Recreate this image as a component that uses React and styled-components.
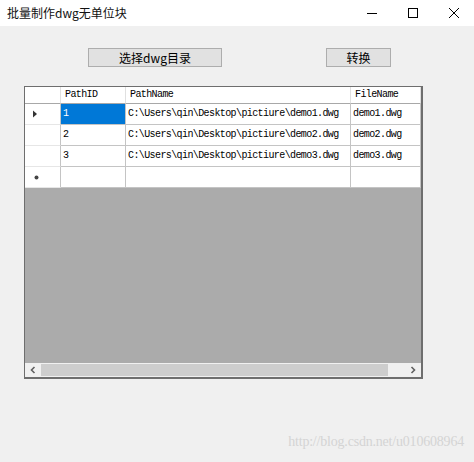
import React from "react";
import styled, { createGlobalStyle } from "styled-components";

const GlobalStyle = createGlobalStyle`
  html, body {
    margin: 0;
    padding: 0;
    background: #f0f0f0;
  }
  * {
    box-sizing: border-box;
  }
`;

const Window = styled.div`
  position: relative;
  width: 474px;
  height: 462px;
  background: #f0f0f0;
  display: flex;
  flex-direction: column;
  overflow: hidden;
  font-family: "Noto Sans CJK SC", "Noto Sans", sans-serif;
`;

const TitleBar = styled.div`
  height: 26px;
  background: #ffffff;
  display: flex;
  align-items: center;
  padding-left: 7px;
`;

const Title = styled.div`
  flex: 1;
  font-size: 12px;
  color: #111;
  line-height: 26px;
`;

const Controls = styled.div`
  display: flex;
  height: 26px;
`;

const ControlButton = styled.div`
  width: 41px;
  height: 26px;
  display: flex;
  align-items: center;
  justify-content: center;
`;

const ButtonRow = styled.div`
  display: flex;
  gap: 104px;
  margin: 22px 0 0 88px;
`;

const FormButton = styled.div`
  width: ${(p) => p.w}px;
  height: 19px;
  border: 1px solid #adadad;
  background: #e1e1e1;
  font-family: "Noto Sans CJK SC", sans-serif;
  font-size: 12px;
  line-height: 17px;
  text-align: center;
  color: #000;
`;

const GridBox = styled.div`
  margin: 19px 0 0 24px;
  width: 399px;
  height: 293px;
  border: 1px solid #6e6e6e;
  border-right-width: 2px;
  border-bottom-width: 2px;
  background: #ababab;
  display: flex;
  flex-direction: column;
`;

const Table = styled.div`
  display: grid;
  grid-template-columns: 36px 65px 225px 1fr;
  grid-template-rows: 17px repeat(4, 21px);
  background: #ffffff;
  font-family: "Liberation Mono", "DejaVu Sans Mono", monospace;
  font-size: 10px;
  letter-spacing: -0.6px;
  color: #000;
`;

const HeaderCell = styled.div`
  line-height: 16px;
  padding-left: ${(p) => (p.corner ? 0 : 4)}px;
  border-right: 1px solid #e0e0e0;
  border-bottom: 1px solid #a8a8a8;
  background: #fff;
  white-space: nowrap;
  overflow: hidden;
`;

const Cell = styled.div`
  line-height: 20px;
  padding-left: 2px;
  border-right: 1px solid #c4c4c4;
  border-bottom: 1px solid #c4c4c4;
  background: ${(p) => (p.selected ? "#0078d7" : "#fff")};
  color: ${(p) => (p.selected ? "#fff" : "#000")};
  white-space: nowrap;
  overflow: hidden;
`;

const RowHeader = styled.div`
  border-right: 1px solid #c4c4c4;
  border-bottom: 1px solid #e6e6e6;
  background: #fff;
  display: flex;
  align-items: center;
  padding-left: 7px;
`;

const Workspace = styled.div`
  flex: 1;
  background: #ababab;
`;

const HScroll = styled.div`
  height: 14px;
  background: #f0f0f0;
  display: flex;
  align-items: center;
`;

const Arrow = styled.div`
  width: 16px;
  height: 14px;
  display: flex;
  align-items: center;
  justify-content: center;
`;

const Track = styled.div`
  flex: 1;
  height: 12px;
  display: flex;
  padding-right: 17px;
`;

const Thumb = styled.div`
  flex: 1;
  background: #cdcdcd;
`;

const Watermark = styled.div`
  position: absolute;
  right: 10px;
  bottom: 12px;
  font-family: "Liberation Serif", serif;
  font-size: 14px;
  color: #d4d4d4;
  letter-spacing: -0.2px;
`;

const rows = [
  { id: "1", path: "C:\\Users\\qin\\Desktop\\pictiure\\demo1.dwg", file: "demo1.dwg" },
  { id: "2", path: "C:\\Users\\qin\\Desktop\\pictiure\\demo2.dwg", file: "demo2.dwg" },
  { id: "3", path: "C:\\Users\\qin\\Desktop\\pictiure\\demo3.dwg", file: "demo3.dwg" },
];

const Caret = () => (
  <svg width="6" height="8" viewBox="0 0 6 8">
    <path d="M1 0.5 L5 4 L1 7.5 Z" fill="#333" />
  </svg>
);

const Star = () => (
  <svg width="5" height="5" viewBox="0 0 5 5" style={{ marginLeft: 2 }}>
    <circle cx="2.5" cy="2.5" r="2" fill="#444" />
  </svg>
);

const Chevron = ({ dir }) => (
  <svg width="6" height="8" viewBox="0 0 6 8">
    <path
      d={dir === "left" ? "M4.5 1 L1.5 4 L4.5 7" : "M1.5 1 L4.5 4 L1.5 7"}
      fill="none"
      stroke="#606060"
      strokeWidth="1.6"
    />
  </svg>
);

export default function App() {
  return (
    <>
      <GlobalStyle />
      <Window>
        <TitleBar>
          <Title>批量制作dwg无单位块</Title>
          <Controls>
            <ControlButton>
              <svg width="10" height="10" viewBox="0 0 10 10">
                <path d="M0 5.5 H10" stroke="#000" strokeWidth="1" />
              </svg>
            </ControlButton>
            <ControlButton>
              <svg width="10" height="10" viewBox="0 0 10 10">
                <rect x="0.5" y="0.5" width="9" height="9" fill="none" stroke="#000" />
              </svg>
            </ControlButton>
            <ControlButton>
              <svg width="10" height="10" viewBox="0 0 10 10">
                <path d="M0 0 L10 10 M10 0 L0 10" stroke="#000" strokeWidth="1" />
              </svg>
            </ControlButton>
          </Controls>
        </TitleBar>

        <ButtonRow>
          <FormButton w={134}>选择dwg目录</FormButton>
          <FormButton w={65}>转换</FormButton>
        </ButtonRow>

        <GridBox>
          <Table>
            <HeaderCell corner />
            <HeaderCell>PathID</HeaderCell>
            <HeaderCell>PathName</HeaderCell>
            <HeaderCell>FileName</HeaderCell>
            {rows.map((r, i) => (
              <React.Fragment key={r.id}>
                <RowHeader>{i === 0 ? <Caret /> : null}</RowHeader>
                <Cell selected={i === 0}>{r.id}</Cell>
                <Cell>{r.path}</Cell>
                <Cell>{r.file}</Cell>
              </React.Fragment>
            ))}
            <RowHeader>
              <Star />
            </RowHeader>
            <Cell />
            <Cell />
            <Cell />
          </Table>
          <Workspace />
          <HScroll>
            <Arrow>
              <Chevron dir="left" />
            </Arrow>
            <Track>
              <Thumb />
            </Track>
            <Arrow>
              <Chevron dir="right" />
            </Arrow>
          </HScroll>
        </GridBox>

        <Watermark>http://blog.csdn.net/u010608964</Watermark>
      </Window>
    </>
  );
}
